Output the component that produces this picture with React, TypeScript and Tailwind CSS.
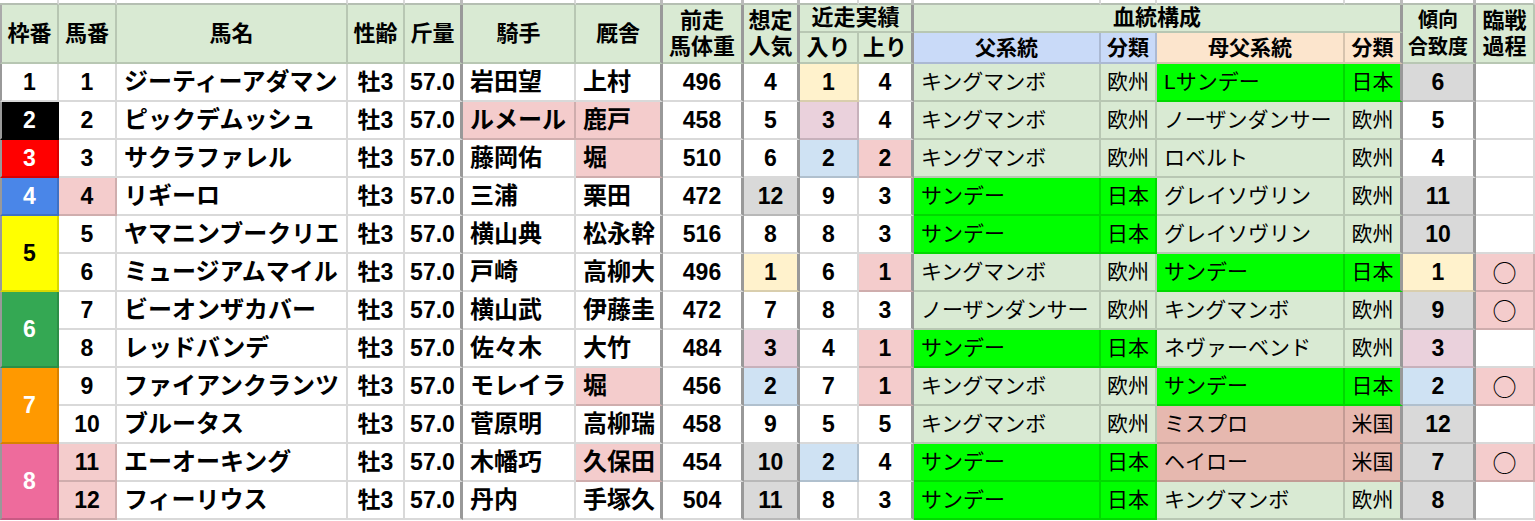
import React from "react";

type Row = {
  waku?: { n: number; cls: string; span: boolean };
  ban: number;
  banBg?: string;
  name: string;
  jockey: string;
  jockeyBg?: string;
  trainer: string;
  trainerBg?: string;
  weight: number;
  pop: number;
  popBg?: string;
  iri: number;
  iriBg?: string;
  agari: number;
  agariBg?: string;
  sire: string;
  sireCat: string;
  sireBg: string;
  dam: string;
  damCat: string;
  damBg: string;
  score: number;
  scoreBg: string;
  circle: boolean;
};

const PINK = "bg-[#f4cccc]";
const YEL = "bg-[#fff2cc]";
const BLU = "bg-[#cfe2f3]";
const MAG = "bg-[#ead1dc]";
const GRY = "bg-[#d9d9d9]";
const GRN = "bg-[#00ff00]";
const RUST = "bg-[#e6b8af]";
const LG = "bg-[#d9ead3]";
const WH = "bg-white";

const rows: Row[] = [
  { waku: { n: 1, cls: "bg-white text-black", span: false }, ban: 1, name: "ジーティーアダマン", jockey: "岩田望", trainer: "上村", weight: 496, pop: 4, iri: 1, iriBg: YEL, agari: 4, sire: "キングマンボ", sireCat: "欧州", sireBg: LG, dam: "Lサンデー", damCat: "日本", damBg: GRN, score: 6, scoreBg: GRY, circle: false },
  { waku: { n: 2, cls: "bg-black text-white", span: false }, ban: 2, name: "ピックデムッシュ", jockey: "ルメール", jockeyBg: PINK, trainer: "鹿戸", trainerBg: PINK, weight: 458, pop: 5, iri: 3, iriBg: MAG, agari: 4, sire: "キングマンボ", sireCat: "欧州", sireBg: LG, dam: "ノーザンダンサー", damCat: "欧州", damBg: LG, score: 5, scoreBg: WH, circle: false },
  { waku: { n: 3, cls: "bg-[#ff0000] text-white", span: false }, ban: 3, name: "サクラファレル", jockey: "藤岡佑", trainer: "堀", trainerBg: PINK, weight: 510, pop: 6, iri: 2, iriBg: BLU, agari: 2, agariBg: PINK, sire: "キングマンボ", sireCat: "欧州", sireBg: LG, dam: "ロベルト", damCat: "欧州", damBg: LG, score: 4, scoreBg: WH, circle: false },
  { waku: { n: 4, cls: "bg-[#4a86e8] text-white", span: false }, ban: 4, banBg: PINK, name: "リギーロ", jockey: "三浦", trainer: "栗田", weight: 472, pop: 12, popBg: GRY, iri: 9, agari: 3, sire: "サンデー", sireCat: "日本", sireBg: GRN, dam: "グレイソヴリン", damCat: "欧州", damBg: LG, score: 11, scoreBg: GRY, circle: false },
  { waku: { n: 5, cls: "bg-[#ffff00] text-black", span: true }, ban: 5, name: "ヤマニンブークリエ", jockey: "横山典", trainer: "松永幹", weight: 516, pop: 8, iri: 8, agari: 3, sire: "サンデー", sireCat: "日本", sireBg: GRN, dam: "グレイソヴリン", damCat: "欧州", damBg: LG, score: 10, scoreBg: GRY, circle: false },
  { ban: 6, name: "ミュージアムマイル", jockey: "戸崎", trainer: "高柳大", weight: 496, pop: 1, popBg: YEL, iri: 6, agari: 1, agariBg: PINK, sire: "キングマンボ", sireCat: "欧州", sireBg: LG, dam: "サンデー", damCat: "日本", damBg: GRN, score: 1, scoreBg: YEL, circle: true },
  { waku: { n: 6, cls: "bg-[#34a853] text-white", span: true }, ban: 7, name: "ビーオンザカバー", jockey: "横山武", trainer: "伊藤圭", weight: 472, pop: 7, iri: 8, agari: 3, sire: "ノーザンダンサー", sireCat: "欧州", sireBg: LG, dam: "キングマンボ", damCat: "欧州", damBg: LG, score: 9, scoreBg: GRY, circle: true },
  { ban: 8, name: "レッドバンデ", jockey: "佐々木", trainer: "大竹", weight: 484, pop: 3, popBg: MAG, iri: 4, agari: 1, agariBg: PINK, sire: "サンデー", sireCat: "日本", sireBg: GRN, dam: "ネヴァーベンド", damCat: "欧州", damBg: LG, score: 3, scoreBg: MAG, circle: false },
  { waku: { n: 7, cls: "bg-[#ff9900] text-white", span: true }, ban: 9, name: "ファイアンクランツ", jockey: "モレイラ", trainer: "堀", trainerBg: PINK, weight: 456, pop: 2, popBg: BLU, iri: 7, agari: 1, agariBg: PINK, sire: "キングマンボ", sireCat: "欧州", sireBg: LG, dam: "サンデー", damCat: "日本", damBg: GRN, score: 2, scoreBg: BLU, circle: true },
  { ban: 10, name: "ブルータス", jockey: "菅原明", trainer: "高柳瑞", weight: 458, pop: 9, iri: 5, agari: 5, sire: "キングマンボ", sireCat: "欧州", sireBg: LG, dam: "ミスプロ", damCat: "米国", damBg: RUST, score: 12, scoreBg: GRY, circle: false },
  { waku: { n: 8, cls: "bg-[#ee6b9c] text-white", span: true }, ban: 11, banBg: PINK, name: "エーオーキング", jockey: "木幡巧", trainer: "久保田", trainerBg: PINK, weight: 454, pop: 10, popBg: GRY, iri: 2, iriBg: BLU, agari: 4, sire: "サンデー", sireCat: "日本", sireBg: GRN, dam: "ヘイロー", damCat: "米国", damBg: RUST, score: 7, scoreBg: GRY, circle: true },
  { ban: 12, banBg: PINK, name: "フィーリウス", jockey: "丹内", trainer: "手塚久", weight: 504, pop: 11, popBg: GRY, iri: 8, agari: 3, sire: "サンデー", sireCat: "日本", sireBg: GRN, dam: "キングマンボ", damCat: "欧州", damBg: LG, score: 8, scoreBg: GRY, circle: false },
];

const THIN = "border-r-2 border-b-2 border-r-black/15 border-b-black/15";
const THICK = "border-r-[3px] border-b-2 border-r-[#999999] border-b-black/15";

function Cell({
  children,
  thick,
  bg = "bg-white",
  left,
  extra = "",
}: {
  children?: React.ReactNode;
  thick?: boolean;
  bg?: string;
  left?: boolean;
  extra?: string;
}) {
  return (
    <div
      className={`${thick ? THICK : THIN} ${bg} flex items-center overflow-hidden whitespace-nowrap ${
        left ? "justify-start pl-[7px]" : "justify-center"
      } ${extra}`}
    >
      {children}
    </div>
  );
}

const thickCols = [false, false, false, false, true, false, true, true, true, false, true, false, false, false, true, true, false];

export default function App() {
  const hdr = "bg-[#d9ead3] font-bold text-[22px] leading-[26px] text-center";
  return (
    <div className="w-[1535px] h-[521px] overflow-hidden bg-white text-black font-['Liberation_Sans','Noto_Sans_CJK_JP',sans-serif]">
      <div className="grid grid-cols-[59px_58px_231px_57px_58px_113px_87px_81px_56px_59px_55px_187px_56px_188px_58px_73px_59px] grid-rows-[5px_28px_31px_repeat(12,38px)]">
        {/* top strip */}
        {thickCols.map((t, i) => (
          <div
            key={"s" + i}
            className={`border-b-2 border-b-[#b5bfb2] ${
              t ? "border-r-[3px] border-r-[#bbbbbb]" : "border-r-2 border-r-black/15"
            }`}
          />
        ))}

        {/* header row 1 */}
        <Cell bg={hdr} extra="row-span-2 border-l-2 border-l-[#aaaaaa]">枠番</Cell>
        <Cell bg={hdr} extra="row-span-2">馬番</Cell>
        <Cell bg={hdr} extra="row-span-2">馬名</Cell>
        <Cell bg={hdr} extra="row-span-2">性齢</Cell>
        <Cell bg={hdr} thick extra="row-span-2">斤量</Cell>
        <Cell bg={hdr} extra="row-span-2">騎手</Cell>
        <Cell bg={hdr} thick extra="row-span-2">厩舎</Cell>
        <Cell bg={hdr} thick extra="row-span-2">
          <span>前走<br />馬体重</span>
        </Cell>
        <Cell bg={hdr} thick extra="row-span-2">
          <span>想定<br />人気</span>
        </Cell>
        <Cell bg={hdr} thick extra="col-span-2">近走実績</Cell>
        <Cell bg={hdr} thick extra="col-span-4 text-[21px]">血統構成</Cell>
        <Cell bg={hdr} thick extra="row-span-2">
          <span className="text-[20px] leading-[27px]">傾向<br />合致度</span>
        </Cell>
        <Cell bg={hdr} extra="row-span-2 text-[21px]">
          <span>臨戦<br />過程</span>
        </Cell>
        {/* header row 2 */}
        <Cell bg={hdr}>入り</Cell>
        <Cell bg={hdr} thick>上り</Cell>
        <Cell bg="bg-[#c9daf8] font-bold text-[21px]">父系統</Cell>
        <Cell bg="bg-[#c9daf8] font-bold text-[21px]">分類</Cell>
        <Cell bg="bg-[#fce5cd] font-bold text-[21px]">母父系統</Cell>
        <Cell bg="bg-[#fce5cd] font-bold text-[21px]" thick>分類</Cell>

        {/* data rows */}
        {rows.map((r) => {
          const b = "font-bold text-[23px]";
          const j = "font-bold text-[24px]";
          return (
            <React.Fragment key={r.ban}>
              {r.waku && (
                <Cell
                  bg={`${r.waku.cls} ${b}`}
                  extra={`border-l-2 border-l-[#999999] ${r.waku.span ? "row-span-2" : ""}`}
                >
                  {r.waku.n}
                </Cell>
              )}
              <Cell bg={`${r.banBg ?? WH} ${b}`}>{r.ban}</Cell>
              <Cell bg={`bg-white ${j}`} left>{r.name}</Cell>
              <Cell bg={`bg-white ${b}`}>牡3</Cell>
              <Cell bg={`bg-white ${b}`} thick>57.0</Cell>
              <Cell bg={`${r.jockeyBg ?? WH} ${j}`} left>{r.jockey}</Cell>
              <Cell bg={`${r.trainerBg ?? WH} ${j}`} left thick>{r.trainer}</Cell>
              <Cell bg={`bg-white ${b}`} thick>{r.weight}</Cell>
              <Cell bg={`${r.popBg ?? WH} ${b}`} thick>{r.pop}</Cell>
              <Cell bg={`${r.iriBg ?? WH} ${b}`}>{r.iri}</Cell>
              <Cell bg={`${r.agariBg ?? WH} ${b}`} thick>{r.agari}</Cell>
              <Cell bg={`${r.sireBg} text-[21px]`} left extra="pl-[6px]">{r.sire}</Cell>
              <Cell bg={`${r.sireBg} text-[21px]`}>{r.sireCat}</Cell>
              <Cell bg={`${r.damBg} text-[21px]`} left extra="pl-[6px]">{r.dam}</Cell>
              <Cell bg={`${r.damBg} text-[21px]`} thick>{r.damCat}</Cell>
              <Cell bg={`${r.scoreBg} ${b}`} thick>{r.score}</Cell>
              <Cell bg={r.circle ? PINK : WH}>
                {r.circle ? (
                  <span className="font-['Noto_Sans_CJK_JP',sans-serif] text-[24px] leading-none">○</span>
                ) : null}
              </Cell>
            </React.Fragment>
          );
        })}
      </div>
    </div>
  );
}
